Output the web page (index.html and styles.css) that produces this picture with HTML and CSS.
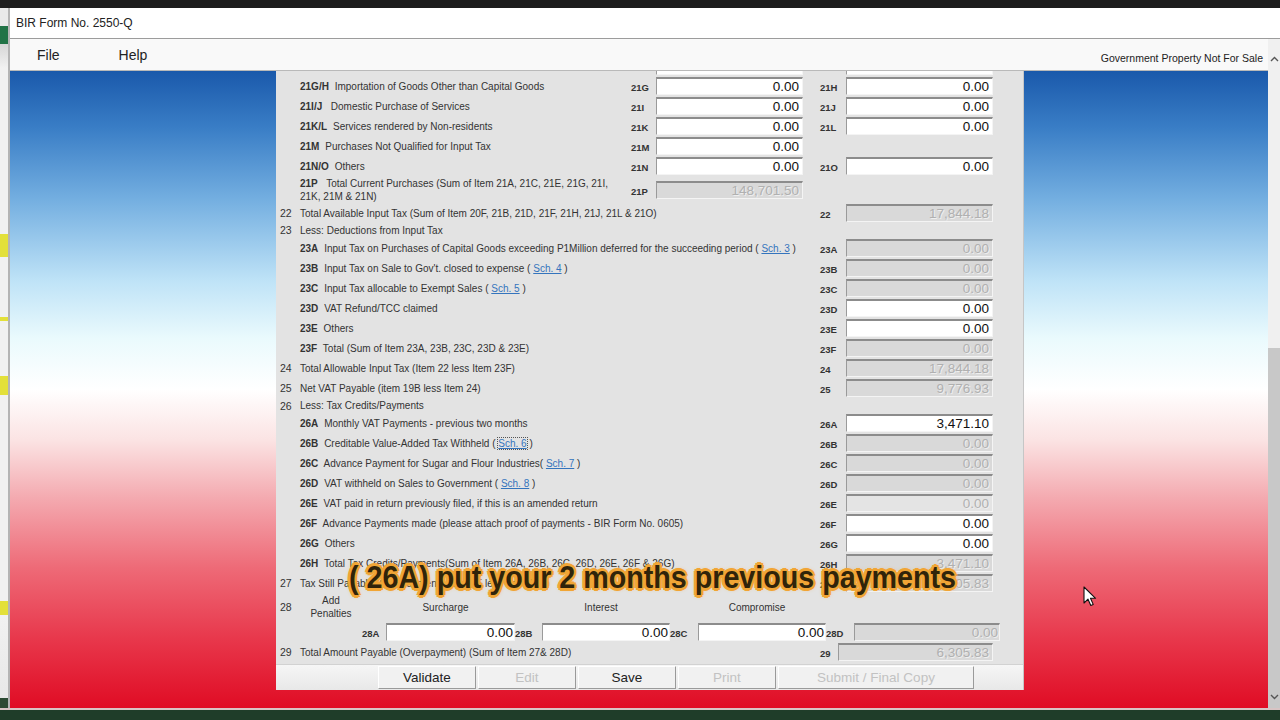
FILE: index.html
```html
<!DOCTYPE html>
<html lang="en">
<head>
<meta charset="UTF-8">
<meta name="viewport" content="width=device-width, initial-scale=1.0">
<title>BIR Form No. 2550-Q</title>
<link rel="stylesheet" href="styles.css">
</head>
<body>

<div class="screen">
    <div class="top-strip"></div>

    <div class="middle">
        <div class="excel-strip"></div>

        <div class="window">
            <div class="titlebar">BIR Form No. 2550-Q</div>

            <div class="window-body">
                <div class="main">
                    <div class="menubar">
                        <span class="menu-item">File</span>
                        <span class="menu-item">Help</span>
                        <span class="menubar-note">Government Property Not For Sale</span>
                    </div>

                    <div class="content">
                        <div class="form-panel">
                            <div class="form-scroll">
                                <div class="form-rows">

                                    <!-- 21 purchases (scrolled, only the box bottoms of 21E/F show) -->
                                    <div class="row">
                                        <span class="desc"></span>
                                        <span class="code"></span><span class="field"></span>
                                        <span class="code c2"></span><span class="field f2"></span>
                                    </div>
                                    <div class="row">
                                        <span class="desc"><b>21G/H</b> Importation of Goods Other than Capital Goods</span>
                                        <span class="code">21G</span><span class="field">0.00</span>
                                        <span class="code c2">21H</span><span class="field f2">0.00</span>
                                    </div>
                                    <div class="row">
                                        <span class="desc"><b>21I/J</b>&nbsp; Domestic Purchase of Services</span>
                                        <span class="code">21I</span><span class="field">0.00</span>
                                        <span class="code c2">21J</span><span class="field f2">0.00</span>
                                    </div>
                                    <div class="row">
                                        <span class="desc"><b>21K/L</b> Services rendered by Non-residents</span>
                                        <span class="code">21K</span><span class="field">0.00</span>
                                        <span class="code c2">21L</span><span class="field f2">0.00</span>
                                    </div>
                                    <div class="row">
                                        <span class="desc"><b>21M</b> Purchases Not Qualified for Input Tax</span>
                                        <span class="code">21M</span><span class="field">0.00</span>
                                    </div>
                                    <div class="row">
                                        <span class="desc"><b>21N/O</b> Others</span>
                                        <span class="code">21N</span><span class="field">0.00</span>
                                        <span class="code c2">21O</span><span class="field f2">0.00</span>
                                    </div>
                                    <div class="row tall">
                                        <span class="desc wrap"><b>21P</b>&nbsp; Total Current Purchases (Sum of Item 21A, 21C, 21E, 21G, 21I, 21K, 21M &amp; 21N)</span>
                                        <span class="code">21P</span><span class="field off">148,701.50</span>
                                    </div>

                                    <!-- 22 - 25 -->
                                    <div class="row r18">
                                        <span class="num">22</span>
                                        <span class="desc wide">Total Available Input Tax (Sum of Item 20F, 21B, 21D, 21F, 21H, 21J, 21L &amp; 21O)</span>
                                        <span class="code c2">22</span><span class="field f2 off">17,844.18</span>
                                    </div>
                                    <div class="row r16">
                                        <span class="num">23</span>
                                        <span class="desc wide">Less: Deductions from Input Tax</span>
                                    </div>
                                    <div class="row">
                                        <span class="desc wide"><b>23A</b> Input Tax on Purchases of Capital Goods exceeding P1Million deferred for the succeeding period ( <a class="sch">Sch. 3</a> )</span>
                                        <span class="code c2">23A</span><span class="field f2 off">0.00</span>
                                    </div>
                                    <div class="row">
                                        <span class="desc wide"><b>23B</b> Input Tax on Sale to Gov't. closed to expense ( <a class="sch">Sch. 4</a> )</span>
                                        <span class="code c2">23B</span><span class="field f2 off">0.00</span>
                                    </div>
                                    <div class="row">
                                        <span class="desc wide"><b>23C</b> Input Tax allocable to Exempt Sales ( <a class="sch">Sch. 5</a> )</span>
                                        <span class="code c2">23C</span><span class="field f2 off">0.00</span>
                                    </div>
                                    <div class="row">
                                        <span class="desc wide"><b>23D</b> VAT Refund/TCC claimed</span>
                                        <span class="code c2">23D</span><span class="field f2">0.00</span>
                                    </div>
                                    <div class="row">
                                        <span class="desc wide"><b>23E</b> Others</span>
                                        <span class="code c2">23E</span><span class="field f2">0.00</span>
                                    </div>
                                    <div class="row">
                                        <span class="desc wide"><b>23F</b> Total (Sum of Item 23A, 23B, 23C, 23D &amp; 23E)</span>
                                        <span class="code c2">23F</span><span class="field f2 off">0.00</span>
                                    </div>
                                    <div class="row">
                                        <span class="num">24</span>
                                        <span class="desc wide">Total Allowable Input Tax (Item 22 less Item 23F)</span>
                                        <span class="code c2">24</span><span class="field f2 off">17,844.18</span>
                                    </div>
                                    <div class="row">
                                        <span class="num">25</span>
                                        <span class="desc wide">Net VAT Payable (item 19B less Item 24)</span>
                                        <span class="code c2">25</span><span class="field f2 off">9,776.93</span>
                                    </div>

                                    <!-- 26 tax credits -->
                                    <div class="row r15">
                                        <span class="num">26</span>
                                        <span class="desc wide">Less: Tax Credits/Payments</span>
                                    </div>
                                    <div class="row">
                                        <span class="desc wide"><b>26A</b> Monthly VAT Payments - previous two months</span>
                                        <span class="code c2">26A</span><span class="field f2">3,471.10</span>
                                    </div>
                                    <div class="row">
                                        <span class="desc wide"><b>26B</b> Creditable Value-Added Tax Withheld ( <a class="sch focused">Sch. 6</a> )</span>
                                        <span class="code c2">26B</span><span class="field f2 off">0.00</span>
                                    </div>
                                    <div class="row">
                                        <span class="desc wide"><b>26C</b> Advance Payment for Sugar and Flour Industries( <a class="sch">Sch. 7</a> )</span>
                                        <span class="code c2">26C</span><span class="field f2 off">0.00</span>
                                    </div>
                                    <div class="row">
                                        <span class="desc wide"><b>26D</b> VAT withheld on Sales to Government ( <a class="sch">Sch. 8</a> )</span>
                                        <span class="code c2">26D</span><span class="field f2 off">0.00</span>
                                    </div>
                                    <div class="row">
                                        <span class="desc wide"><b>26E</b> VAT paid in return previously filed, if this is an amended return</span>
                                        <span class="code c2">26E</span><span class="field f2 off light">0.00</span>
                                    </div>
                                    <div class="row">
                                        <span class="desc wide"><b>26F</b> Advance Payments made (please attach proof of payments - BIR Form No. 0605)</span>
                                        <span class="code c2">26F</span><span class="field f2">0.00</span>
                                    </div>
                                    <div class="row">
                                        <span class="desc wide"><b>26G</b> Others</span>
                                        <span class="code c2">26G</span><span class="field f2">0.00</span>
                                    </div>
                                    <div class="row">
                                        <span class="desc wide"><b>26H</b> Total Tax Credits/Payments(Sum of Item 26A, 26B, 26C, 26D, 26E, 26F &amp; 26G)</span>
                                        <span class="code c2">26H</span><span class="field f2 off">3,471.10</span>
                                    </div>
                                    <div class="row">
                                        <span class="num">27</span>
                                        <span class="desc wide">Tax Still Payable/(Overpayment) (Item 25 less Item 26H)</span>
                                        <span class="code c2">27</span><span class="field f2 off">6,305.83</span>
                                    </div>

                                    <!-- 28 penalties -->
                                    <div class="pen-head">
                                        <div class="pen-lead">
                                            <span class="pen-num">28</span>
                                            <span class="pen-title">Add<br>Penalties</span>
                                        </div>
                                        <span class="pen-label p1">Surcharge</span>
                                        <span class="pen-label p2">Interest</span>
                                        <span class="pen-label p3">Compromise</span>
                                    </div>
                                    <div class="pen-row">
                                        <span class="pen-code">28A</span><span class="field pen-field">0.00</span>
                                        <span class="pen-code">28B</span><span class="field pen-field">0.00</span>
                                        <span class="pen-code">28C</span><span class="field pen-field">0.00</span>
                                        <span class="pen-code">28D</span><span class="field pen-field off">0.00</span>
                                    </div>

                                    <div class="row">
                                        <span class="num">29</span>
                                        <span class="desc wide">Total Amount Payable (Overpayment) (Sum of Item 27&amp; 28D)</span>
                                        <span class="code c2">29</span><span class="field f2 off total">6,305.83</span>
                                    </div>

                                </div>
                            </div>

                            <div class="button-bar">
                                <button class="btn">Validate</button>
                                <button class="btn" disabled>Edit</button>
                                <button class="btn">Save</button>
                                <button class="btn" disabled>Print</button>
                                <button class="btn wide-btn" disabled>Submit / Final Copy</button>
                            </div>
                        </div>
                    </div>
                </div>

                <div class="scrollbar">
                    <div class="scroll-btn up">
                        <svg width="9" height="6" viewBox="0 0 9 6"><path d="M1 5 L4.5 1.5 L8 5" fill="none" stroke="#555" stroke-width="1.4"/></svg>
                    </div>
                    <div class="scroll-track">
                        <div class="scroll-thumb"></div>
                    </div>
                    <div class="scroll-btn down">
                        <svg width="9" height="6" viewBox="0 0 9 6"><path d="M1 1 L4.5 4.5 L8 1" fill="none" stroke="#555" stroke-width="1.4"/></svg>
                    </div>
                </div>
            </div>
        </div>
    </div>

    <div class="bottom-strip"></div>

    <!-- video caption over the form -->
    <div class="caption">( 26A) put your 2 months previous payments</div>

    <svg class="cursor" width="14" height="22" viewBox="0 0 14 22">
        <path d="M1 1 L1 17 L5 13.2 L7.8 19.5 L10.2 18.4 L7.5 12.3 L12.6 12.3 Z" fill="#fff" stroke="#111" stroke-width="1.1" stroke-linejoin="round"/>
    </svg>
</div>

</body>
</html>
```

FILE: styles.css
```css
* {
    box-sizing: border-box;
}
body {
    margin: 0;
    width: 1280px;
    height: 720px;
    overflow: hidden;
    background: #1c1c1c;
    font-family: "Liberation Sans", Arial, sans-serif;
}
.screen {
    position: relative;
    width: 1280px;
    height: 720px;
    display: flex;
    flex-direction: column;
}
.top-strip {
    height: 8px;
    background: #1d1d1d;
}
.middle {
    height: 700px;
    display: flex;
}
.excel-strip {
    width: 8px;
    background: linear-gradient(to bottom,
        #e9e9e9 0, #e9e9e9 18px,
        #217346 18px, #217346 36px,
        #d6d6d6 36px, #f1f1f1 60px,
        #f1f1f1 226px, #e3e03a 226px, #e3e03a 249px,
        #f1f1f1 249px, #f1f1f1 309px, #e3e03a 309px, #e3e03a 313px,
        #f1f1f1 313px, #f1f1f1 368px, #e3e03a 368px, #e3e03a 387px,
        #f1f1f1 387px, #f1f1f1 593px, #e3e03a 593px, #e3e03a 607px,
        #f1f1f1 607px, #e8e8e8 690px, #2c4a33 690px);
}
.window {
    flex: 1;
    display: flex;
    flex-direction: column;
    border-left: 2px solid #b4b4b4;
    background: #fff;
}
.titlebar {
    height: 31px;
    padding-left: 6px;
    display: flex;
    align-items: center;
    font-size: 12px;
    color: #222;
    background: #fff;
    border-bottom: 1px solid #9c9c9c;
}
.window-body {
    flex: 1;
    display: flex;
    min-height: 0;
}
.main {
    flex: 1;
    display: flex;
    flex-direction: column;
}
.menubar {
    height: 32px;
    display: flex;
    align-items: center;
    gap: 59px;
    padding-left: 27px;
    background: #f9f9f9;
    border-bottom: 1px solid #b9b9b9;
    font-size: 14px;
    color: #222;
}
.menubar-note {
    margin-left: auto;
    align-self: flex-end;
    padding: 0 5px 6px 0;
    font-size: 10.5px;
    color: #222;
}
.content {
    flex: 1;
    padding-left: 266px;
    background: linear-gradient(to bottom,
        #1a59ab 0%,
        #3a7ec6 9%,
        #73aee0 20%,
        #bfe3f7 33%,
        #eafafd 42%,
        #ffffff 50%,
        #fbe3e3 58%,
        #f4aab0 67%,
        #ee6a77 78%,
        #e8384c 89%,
        #e00c24 100%);
}
.form-panel {
    width: 748px;
    height: 619px;
    display: flex;
    flex-direction: column;
    background: #e3e3e3;
    border-right: 1px solid #c6c6c6;
}
.form-scroll {
    flex: 1;
    overflow: hidden;
}
.form-rows {
    margin-top: -15px;
}

/* one line of the form */
.row {
    display: grid;
    grid-template-columns: 20px 331px 25px 147px 17px 26px 147px;
    align-items: center;
    height: 20px;
    padding-left: 4px;
    font-size: 10px;
    color: #333;
}
.row.tall {
    height: 28px;
}
.row.r18 {
    height: 18px;
}
.row.r16 {
    height: 16px;
}
.row.r15 {
    height: 15px;
}
.num {
    grid-column: 1;
    font-size: 10.5px;
}
.desc {
    grid-column: 2;
    white-space: nowrap;
}
.desc.wide {
    grid-column: 2 / 6;
}
.desc.wrap {
    white-space: normal;
    line-height: 13px;
    padding-right: 8px;
}
.desc b {
    margin-right: 3px;
}
.code {
    grid-column: 3;
    padding-top: 3px;
    font-weight: bold;
    font-size: 9.5px;
}
.code.c2 {
    grid-column: 6;
}
.sch {
    color: #3474bd;
    text-decoration: underline;
}
.sch.focused {
    outline: 1px dotted #555;
}

/* input boxes */
.field {
    grid-column: 4;
    height: 18px;
    padding-right: 3px;
    background: #fff;
    border-top: 2px solid #8c8c8c;
    border-left: 1px solid #9a9a9a;
    border-right: 1px solid #f4f4f4;
    border-bottom: 1px solid #f4f4f4;
    font-size: 13.5px;
    line-height: 15px;
    text-align: right;
    color: #111;
}
.field.f2 {
    grid-column: 7;
}
.field.off {
    background: #d9d9d9;
    color: #b0b0b0;
    text-shadow: 1px 1px 0 #efefef;
}
.field.off.light {
    background: #e4e4e4;
}
.field.total {
    margin-left: -8px;
}

/* penalties block */
.pen-head,
.pen-row {
    display: grid;
    grid-template-columns: 86px 24px 129px 27px 128px 28px 128px 28px 146px;
    align-items: center;
    font-size: 10px;
    color: #333;
}
.pen-head {
    height: 28px;
}
.pen-row {
    height: 21px;
}
.pen-lead {
    grid-column: 1;
    display: flex;
    align-items: center;
    padding-left: 4px;
}
.pen-num {
    width: 20px;
    font-size: 10.5px;
}
.pen-title {
    width: 62px;
    text-align: center;
    line-height: 13px;
}
.pen-label {
    text-align: center;
    padding-right: 10px;
}
.pen-label.p1 {
    grid-column: 3;
}
.pen-label.p2 {
    grid-column: 5;
}
.pen-label.p3 {
    grid-column: 7;
}
.pen-code {
    padding-top: 3px;
    font-weight: bold;
    font-size: 9.5px;
}
.pen-row .pen-code:first-child {
    grid-column: 2;
}
.field.pen-field {
    grid-column: auto;
    padding-right: 1px;
}

/* bottom buttons */
.button-bar {
    height: 26px;
    display: flex;
    align-items: center;
    gap: 2px;
    padding-left: 102px;
    background: linear-gradient(to bottom, #f6f6f6, #e8e8e8);
    border-top: 1px solid #d2d2d2;
}
.btn {
    width: 98px;
    height: 23px;
    padding: 0;
    background: #f1f1f1;
    border: 1px solid;
    border-color: #ffffff #9a9a9a #9a9a9a #ffffff;
    font-family: "Liberation Sans", Arial, sans-serif;
    font-size: 13.5px;
    color: #222;
}
.btn:disabled {
    color: #c2c2c2;
}
.btn.wide-btn {
    width: 196px;
}

/* window scrollbar */
.scrollbar {
    width: 12px;
    display: flex;
    flex-direction: column;
    background: #f0f0f0;
}
.scroll-btn {
    display: flex;
    justify-content: center;
    align-items: center;
}
.scroll-btn.up {
    height: 40px;
}
.scroll-btn.down {
    height: 22px;
    background: #c8c8c8;
}
.scroll-track {
    flex: 1;
    display: flex;
    flex-direction: column;
}
.scroll-thumb {
    margin-top: auto;
    height: 338px;
    background: #c8c8c8;
}
.bottom-strip {
    height: 12px;
    background: #1f3d29;
    border-top: 2px solid #d8c4c4;
}

/* overlays */
.caption {
    position: absolute;
    left: 349px;
    top: 560px;
    white-space: nowrap;
    font-family: "Liberation Sans", sans-serif;
    font-weight: bold;
    font-size: 31px;
    color: #30240a;
    transform: scaleX(0.925);
    transform-origin: left center;
    text-shadow:
        -3px 0 0 #f1a535, 3px 0 0 #f1a535, 0 -3px 0 #f1a535, 0 3px 0 #f1a535,
        -2px -2px 0 #f1a535, 2px -2px 0 #f1a535, -2px 2px 0 #f1a535, 2px 2px 0 #f1a535,
        0 0 5px #e89a20;
}
.cursor {
    position: absolute;
    left: 1083px;
    top: 586px;
}
```
